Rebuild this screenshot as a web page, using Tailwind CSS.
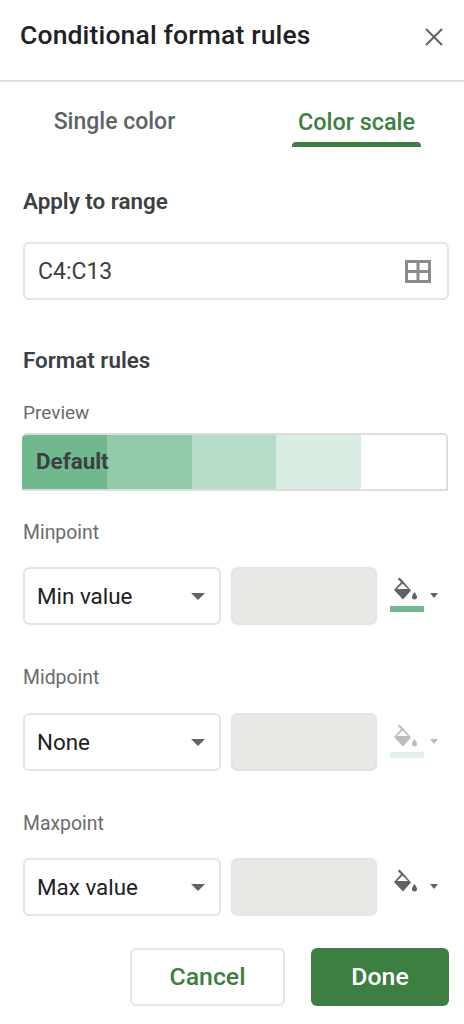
<!DOCTYPE html>
<html lang="en">
  <head>
    <meta charset="UTF-8" />
    <title>Conditional format rules</title>
    <script src="https://cdn.jsdelivr.net/npm/@tailwindcss/browser@4"></script>
  </head>
  <body class="bg-white font-['Roboto',sans-serif] h-[1024px] w-[464px] overflow-hidden">
    <!-- header -->
    <header class="flex h-[82px] items-start justify-between border-b-2 border-[#e0e0e0] pl-[20px] pr-[19px] pt-[17px]">
      <h1 class="text-[26.5px] leading-[36px] font-medium tracking-[0.15px] text-[#202124]">Conditional format rules</h1>
      <svg class="mt-[9px]" width="22" height="22" viewBox="0 0 22 22" fill="none" stroke="#5f6368" stroke-width="2"><path d="M3 3l16 16M19 3L3 19" /></svg>
    </header>

    <!-- tabs -->
    <div class="flex h-[65px] justify-between pl-[23px] pr-[43px]">
      <div class="flex w-[183px] justify-center pt-[25px]">
        <span class="text-[23px] leading-[30px] font-medium text-[#5f6368]">Single color</span>
      </div>
      <div class="flex h-full w-[129px] flex-col items-center justify-between pt-[25px]">
        <span class="text-[23.4px] leading-[30px] font-medium text-[#3c7f41]">Color scale</span>
        <div class="h-[5px] w-full rounded-t-[4px] bg-[#3c7f41]"></div>
      </div>
    </div>

    <main class="px-[23px]">
      <h2 class="mt-[40px] text-[22.4px] leading-[28px] font-semibold text-[#3c4043]">Apply to range</h2>
      <div class="mt-[27px] flex h-[58px] w-[426px] items-center justify-between rounded-[6px] border-2 border-[#e3e3e8] pl-[13px] pr-[16px]">
        <span class="pt-[2px] text-[23px] text-[#3c4043]">C4:C13</span>
        <svg width="26" height="23" viewBox="0 0 26 23" fill="none" stroke="#8a8a8a" stroke-width="3"><path d="M1.5 1.5h23v20h-23zM13 1.5v20M1.5 11.5h23" /></svg>
      </div>

      <h2 class="mt-[46px] text-[22.4px] leading-[28px] font-semibold text-[#3c4043]">Format rules</h2>
      <p class="mt-[27px] text-[19px] leading-[24px] text-[#6b6b6b]">Preview</p>
      <div class="mt-[8px] -ml-[1px] flex h-[58px] w-[426px] overflow-hidden rounded-t-[5px] border-2 border-l-0 border-[#dddddd]">
        <div class="relative z-10 flex w-[85px] shrink-0 items-center bg-[#6fb98d] pl-[14px] text-[22.4px] font-bold whitespace-nowrap text-[#3c4043]">Default</div>
        <div class="w-[85px] bg-[#93cbaa]"></div>
        <div class="w-[84px] bg-[#b6dcc7]"></div>
        <div class="w-[85px] bg-[#d9ede3]"></div>
        <div class="flex-1 bg-white"></div>
      </div>

      <!-- minpoint -->
      <p class="mt-[30px] text-[19.4px] leading-[24px] text-[#6b6b6b]">Minpoint</p>
      <div class="mt-[22px] flex items-center">
        <div class="flex h-[58px] w-[198px] items-center justify-between rounded-[6px] border-2 border-[#e3e3e8] pl-[12px] pr-[14px]">
          <span class="pt-[1px] text-[22.4px] text-[#202124]">Min value</span>
          <svg width="14" height="7" viewBox="0 0 14 7"><path d="M0 0h14L7 7z" fill="#5f6368" /></svg>
        </div>
        <div class="ml-[10px] h-[58px] w-[146px] rounded-[6px] border-2 border-[#e3e3e8] bg-[#e8e9e4]"></div>
        <div class="ml-[13px] flex w-[34px] flex-col self-start pt-[10px]">
          <svg width="26" height="26" viewBox="0 0 26 26" class="ml-[3px]"><path d="M6.5.5 4.8 2 8 5.2 1 13l9 9.5 8-9L10 4zM9.5 6.5 15 12H4z" fill="#5f6368" fill-rule="evenodd" /><path d="M21.5 15c1.6 2.4 2.5 3.7 2.5 5a2.5 2.5 0 0 1-5 0c0-1.3.9-2.6 2.500-5z" fill="#5f6368" /></svg>
          <div class="mt-[3px] h-[6px] w-[34px] bg-[#6fb98d]"></div>
        </div>
        <svg class="mb-[1px] ml-[6px]" width="8" height="5" viewBox="0 0 8 5"><path d="M0 0h8L4 5z" fill="#5f6368" /></svg>
      </div>

      <!-- midpoint -->
      <p class="mt-[41px] text-[19.4px] leading-[24px] text-[#6b6b6b]">Midpoint</p>
      <div class="mt-[23px] flex items-center">
        <div class="flex h-[58px] w-[198px] items-center justify-between rounded-[6px] border-2 border-[#e3e3e8] pl-[12px] pr-[14px]">
          <span class="pt-[1px] text-[22.4px] text-[#202124]">None</span>
          <svg width="14" height="7" viewBox="0 0 14 7"><path d="M0 0h14L7 7z" fill="#5f6368" /></svg>
        </div>
        <div class="ml-[10px] h-[58px] w-[146px] rounded-[6px] border-2 border-[#e3e3e8] bg-[#e8e9e4]"></div>
        <div class="ml-[13px] flex w-[34px] flex-col self-start pt-[11px]">
          <svg width="26" height="26" viewBox="0 0 26 26" class="ml-[3px]"><path d="M6.5.5 4.8 2 8 5.2 1 13l9 9.5 8-9L10 4zM9.5 6.5 15 12H4z" fill="#bdbdbd" fill-rule="evenodd" /><path d="M21.5 15c1.6 2.4 2.5 3.7 2.5 5a2.5 2.5 0 0 1-5 0c0-1.3.9-2.6 2.500-5z" fill="#bdbdbd" /></svg>
          <div class="mt-[2px] h-[6px] w-[34px] bg-[#e3f1e9]"></div>
        </div>
        <svg class="mb-[1px] ml-[6px]" width="8" height="5" viewBox="0 0 8 5"><path d="M0 0h8L4 5z" fill="#bdbdbd" /></svg>
      </div>

      <!-- maxpoint -->
      <p class="mt-[41px] text-[19.4px] leading-[24px] text-[#6b6b6b]">Maxpoint</p>
      <div class="mt-[22px] flex items-center">
        <div class="flex h-[58px] w-[198px] items-center justify-between rounded-[6px] border-2 border-[#e3e3e8] pl-[12px] pr-[14px]">
          <span class="pt-[1px] text-[22.4px] text-[#202124]">Max value</span>
          <svg width="14" height="7" viewBox="0 0 14 7"><path d="M0 0h14L7 7z" fill="#5f6368" /></svg>
        </div>
        <div class="ml-[10px] h-[58px] w-[146px] rounded-[6px] border-2 border-[#e3e3e8] bg-[#e8e9e4]"></div>
        <div class="ml-[13px] flex w-[34px] flex-col self-start pt-[11px]">
          <svg width="26" height="26" viewBox="0 0 26 26" class="ml-[3px]"><path d="M6.5.5 4.8 2 8 5.2 1 13l9 9.5 8-9L10 4zM9.5 6.5 15 12H4z" fill="#5f6368" fill-rule="evenodd" /><path d="M21.5 15c1.6 2.4 2.5 3.7 2.5 5a2.5 2.5 0 0 1-5 0c0-1.3.9-2.6 2.500-5z" fill="#5f6368" /></svg>
        </div>
        <svg class="mb-[1px] ml-[6px]" width="8" height="5" viewBox="0 0 8 5"><path d="M0 0h8L4 5z" fill="#5f6368" /></svg>
      </div>

      <!-- footer buttons -->
      <div class="mt-[32px] flex w-[426px] justify-end gap-[26px]">
        <button class="h-[58px] w-[155px] rounded-[6px] border-2 border-[#e3e3e8] bg-white text-[24.8px] font-medium text-[#3c7f41]">Cancel</button>
        <button class="h-[58px] w-[138px] rounded-[6px] bg-[#3c7f41] text-[24.8px] font-medium text-white">Done</button>
      </div>
    </main>
  </body>
</html>
